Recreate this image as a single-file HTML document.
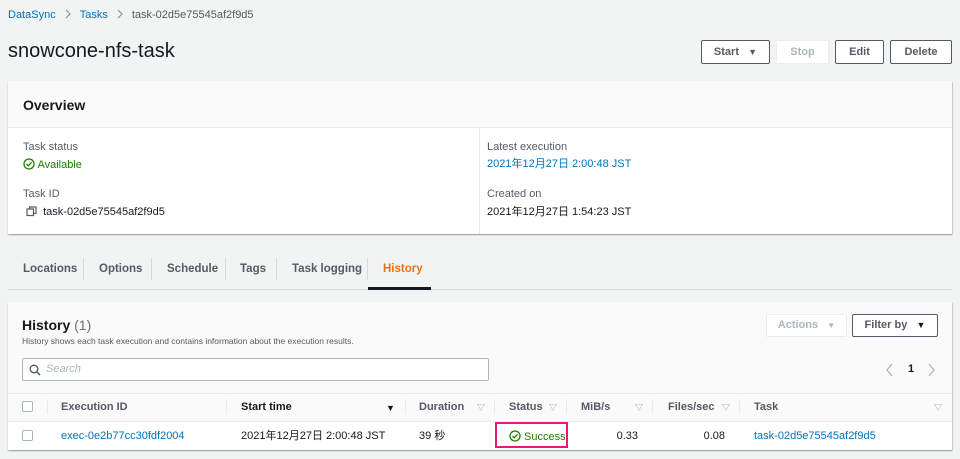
<!DOCTYPE html>
<html><head><meta charset="utf-8"><style>
*{box-sizing:border-box;margin:0;padding:0}
body{width:960px;height:459px;background:#f2f3f3;font-family:"Liberation Sans","Noto Sans CJK JP",sans-serif;color:#16191f;position:relative;overflow:hidden;font-size:11px;line-height:13px}
.a{position:absolute;white-space:nowrap;line-height:13px}
.lnk{color:#0073bb}
.lab{color:#545b64;font-size:11px}
.btn{position:absolute;border:1px solid #545b64;border-radius:2px;background:#fff;font-weight:bold;font-size:11px;color:#545b64;display:flex;align-items:center;justify-content:center}
.card{position:absolute;background:#fff;box-shadow:0 1px 1px rgba(0,28,36,.3),1px 1px 1px rgba(0,28,36,.15)}
.th{position:absolute;top:401px;font-weight:bold;color:#545b64;font-size:11px;line-height:13px}
.dv{position:absolute;width:1px;background:#eaeded}
.tri{position:absolute;color:#879596;font-size:8px;line-height:10px}
.cb{position:absolute;width:11px;height:11px;border:1px solid #aab7b8;border-radius:2px;background:#fff}
.tab{position:absolute;top:263px;font-weight:bold;color:#545b64;font-size:11.5px;line-height:13px;white-space:nowrap}
</style></head><body>
<div class="a" style="left:8px;top:9px;font-size:11px"><span class="lnk">DataSync</span><svg width="24" height="10" viewBox="0 0 24 10" style="vertical-align:-1px"><path d="M10 1l4 4-4 4" fill="none" stroke="#879596" stroke-width="1.2"/></svg><span class="lnk">Tasks</span><svg width="24" height="10" viewBox="0 0 24 10" style="vertical-align:-1px"><path d="M10 1l4 4-4 4" fill="none" stroke="#879596" stroke-width="1.2"/></svg><span style="color:#545b64">task-02d5e75545af2f9d5</span></div>
<div class="a" style="left:8px;top:40px;font-size:20px;line-height:22px;color:#16191f">snowcone-nfs-task</div>
<div class="btn" style="left:701px;top:40px;width:69px;height:24px">Start&nbsp;&nbsp;&nbsp;<span style="font-size:9px">▼</span></div>
<div class="btn" style="left:776px;top:40px;width:53px;height:24px;border-color:#eaeded;color:#aab7b8">Stop</div>
<div class="btn" style="left:835px;top:40px;width:49px;height:24px">Edit</div>
<div class="btn" style="left:890px;top:40px;width:62px;height:24px">Delete</div>

<div class="card" style="left:8px;top:81px;width:944px;height:153px">
<div style="height:47px;background:#fafafa;border-bottom:1px solid #eaeded"></div>
<div class="a" style="left:15px;top:16px;font-size:14px;line-height:16px;font-weight:bold">Overview</div>
<div style="position:absolute;left:471px;top:47px;width:1px;height:106px;background:#eaeded"></div>
<div class="a lab" style="left:15px;top:60px">Task status</div>
<div class="a" style="left:15px;top:77px;color:#1d8102"><svg width="12" height="12" viewBox="0 0 12 12" style="vertical-align:-2px"><circle cx="6" cy="6" r="5" fill="none" stroke="#1d8102" stroke-width="1.3"/><path d="M3.5 6l1.8 1.8L8.6 4.3" fill="none" stroke="#1d8102" stroke-width="1.3"/></svg> Available</div>
<div class="a lab" style="left:15px;top:107px">Task ID</div>
<div class="a" style="left:18px;top:125px"><svg width="11" height="11" viewBox="0 0 11 11" style="vertical-align:-2px"><rect x="1" y="3" width="6.5" height="6.5" fill="none" stroke="#545b64" stroke-width="1.2"/><path d="M3.5 3V1h6.5v6.5H7.5" fill="none" stroke="#545b64" stroke-width="1.2"/></svg>&nbsp; task-02d5e75545af2f9d5</div>
<div class="a lab" style="left:479px;top:60px">Latest execution</div>
<div class="a lnk" style="left:479px;top:77px">2021年12月27日 2:00:48 JST</div>
<div class="a lab" style="left:479px;top:107px">Created on</div>
<div class="a" style="left:479px;top:125px">2021年12月27日 1:54:23 JST</div>
</div>

<div style="position:absolute;left:8px;top:289px;width:944px;height:1px;background:#d5dbdb"></div>
<div style="position:absolute;left:368px;top:287px;width:63px;height:3px;background:#16191f"></div>
<div class="tab" style="left:23px">Locations</div>
<div class="dv" style="left:83px;top:258px;height:22px;background:#d5dbdb"></div>
<div class="tab" style="left:99px">Options</div>
<div class="dv" style="left:151px;top:258px;height:22px;background:#d5dbdb"></div>
<div class="tab" style="left:167px">Schedule</div>
<div class="dv" style="left:225px;top:258px;height:22px;background:#d5dbdb"></div>
<div class="tab" style="left:240px">Tags</div>
<div class="dv" style="left:276px;top:258px;height:22px;background:#d5dbdb"></div>
<div class="tab" style="left:292px">Task logging</div>
<div class="dv" style="left:367px;top:258px;height:22px;background:#d5dbdb"></div>
<div class="tab" style="left:383px;color:#ec7211">History</div>

<div class="card" style="left:8px;top:302px;width:944px;height:148px;background:#fafafa">
<div style="position:absolute;left:0;top:119px;width:944px;height:29px;background:#fff;border-top:1px solid #eaeded"></div>
<div style="position:absolute;left:0;top:91px;width:944px;height:1px;background:#eaeded"></div>
</div>
<div class="a" style="left:22px;top:317px;font-size:14px;line-height:16px;font-weight:bold">History <span style="color:#687078;font-weight:normal">(1)</span></div>
<div class="a" style="left:22px;top:336px;font-size:8.5px;line-height:10px;color:#545b64">History shows each task execution and contains information about the execution results.</div>
<div style="position:absolute;left:22px;top:358px;width:467px;height:23px;background:#fff;border:1px solid #aab7b8;border-radius:2px"></div>
<svg class="a" style="left:29px;top:364px" width="12" height="12" viewBox="0 0 12 12"><circle cx="5" cy="5" r="3.8" fill="none" stroke="#545b64" stroke-width="1.4"/><path d="M7.8 7.8L11 11" stroke="#545b64" stroke-width="1.5"/></svg>
<div class="a" style="left:46px;top:363px;font-style:italic;color:#aab7b8">Search</div>
<div class="btn" style="left:766px;top:314px;width:81px;height:23px;border-color:#eaeded;color:#aab7b8">Actions&nbsp;&nbsp;&nbsp;<span style="font-size:8px">▼</span></div>
<div class="btn" style="left:852px;top:314px;width:86px;height:23px">Filter by&nbsp;&nbsp;&nbsp;<span style="font-size:9px;color:#16191f">▼</span></div>
<svg class="a" style="left:885px;top:363px" width="10" height="14" viewBox="0 0 10 14"><path d="M7 1L2 7l5 6" fill="none" stroke="#aab7b8" stroke-width="1.3"/></svg>
<div class="a" style="left:908px;top:363px;font-weight:bold">1</div>
<svg class="a" style="left:926px;top:363px" width="10" height="14" viewBox="0 0 10 14"><path d="M3 1l5 6-5 6" fill="none" stroke="#aab7b8" stroke-width="1.3"/></svg>

<div class="cb" style="left:22px;top:401px"></div>
<div class="dv" style="left:47px;top:399px;height:15px"></div>
<div class="th" style="left:61px">Execution ID</div>
<div class="dv" style="left:226px;top:399px;height:15px"></div>
<div class="th" style="left:241px;color:#16191f">Start time</div>
<div class="a" style="left:386px;top:402px;font-size:9px">▼</div>
<div class="dv" style="left:405px;top:399px;height:15px"></div>
<div class="th" style="left:419px">Duration</div>
<div class="tri" style="left:477px;top:403px">▽</div>
<div class="dv" style="left:494px;top:399px;height:15px"></div>
<div class="th" style="left:509px">Status</div>
<div class="tri" style="left:549px;top:403px">▽</div>
<div class="dv" style="left:566px;top:399px;height:15px"></div>
<div class="th" style="left:581px">MiB/s</div>
<div class="tri" style="left:635px;top:403px">▽</div>
<div class="dv" style="left:652px;top:399px;height:15px"></div>
<div class="th" style="left:668px">Files/sec</div>
<div class="tri" style="left:722px;top:403px">▽</div>
<div class="dv" style="left:739px;top:399px;height:15px"></div>
<div class="th" style="left:754px">Task</div>
<div class="tri" style="left:934px;top:403px">▽</div>

<div class="cb" style="left:22px;top:430px"></div>
<div class="a lnk" style="left:61px;top:430px">exec-0e2b77cc30fdf2004</div>
<div class="a" style="left:241px;top:430px">2021年12月27日 2:00:48 JST</div>
<div class="a" style="left:419px;top:430px">39 秒</div>
<div style="position:absolute;left:495px;top:422px;width:73px;height:26px;border:2px solid #e8187c"></div>
<div class="a" style="left:509px;top:430px;color:#1d8102"><svg width="12" height="12" viewBox="0 0 12 12" style="vertical-align:-2px"><circle cx="6" cy="6" r="5" fill="none" stroke="#1d8102" stroke-width="1.3"/><path d="M3.5 6l1.8 1.8L8.6 4.3" fill="none" stroke="#1d8102" stroke-width="1.3"/></svg> Success</div>
<div class="a" style="left:600px;top:430px;width:38px;text-align:right">0.33</div>
<div class="a" style="left:687px;top:430px;width:38px;text-align:right">0.08</div>
<div class="a lnk" style="left:754px;top:430px">task-02d5e75545af2f9d5</div>
</body></html>
